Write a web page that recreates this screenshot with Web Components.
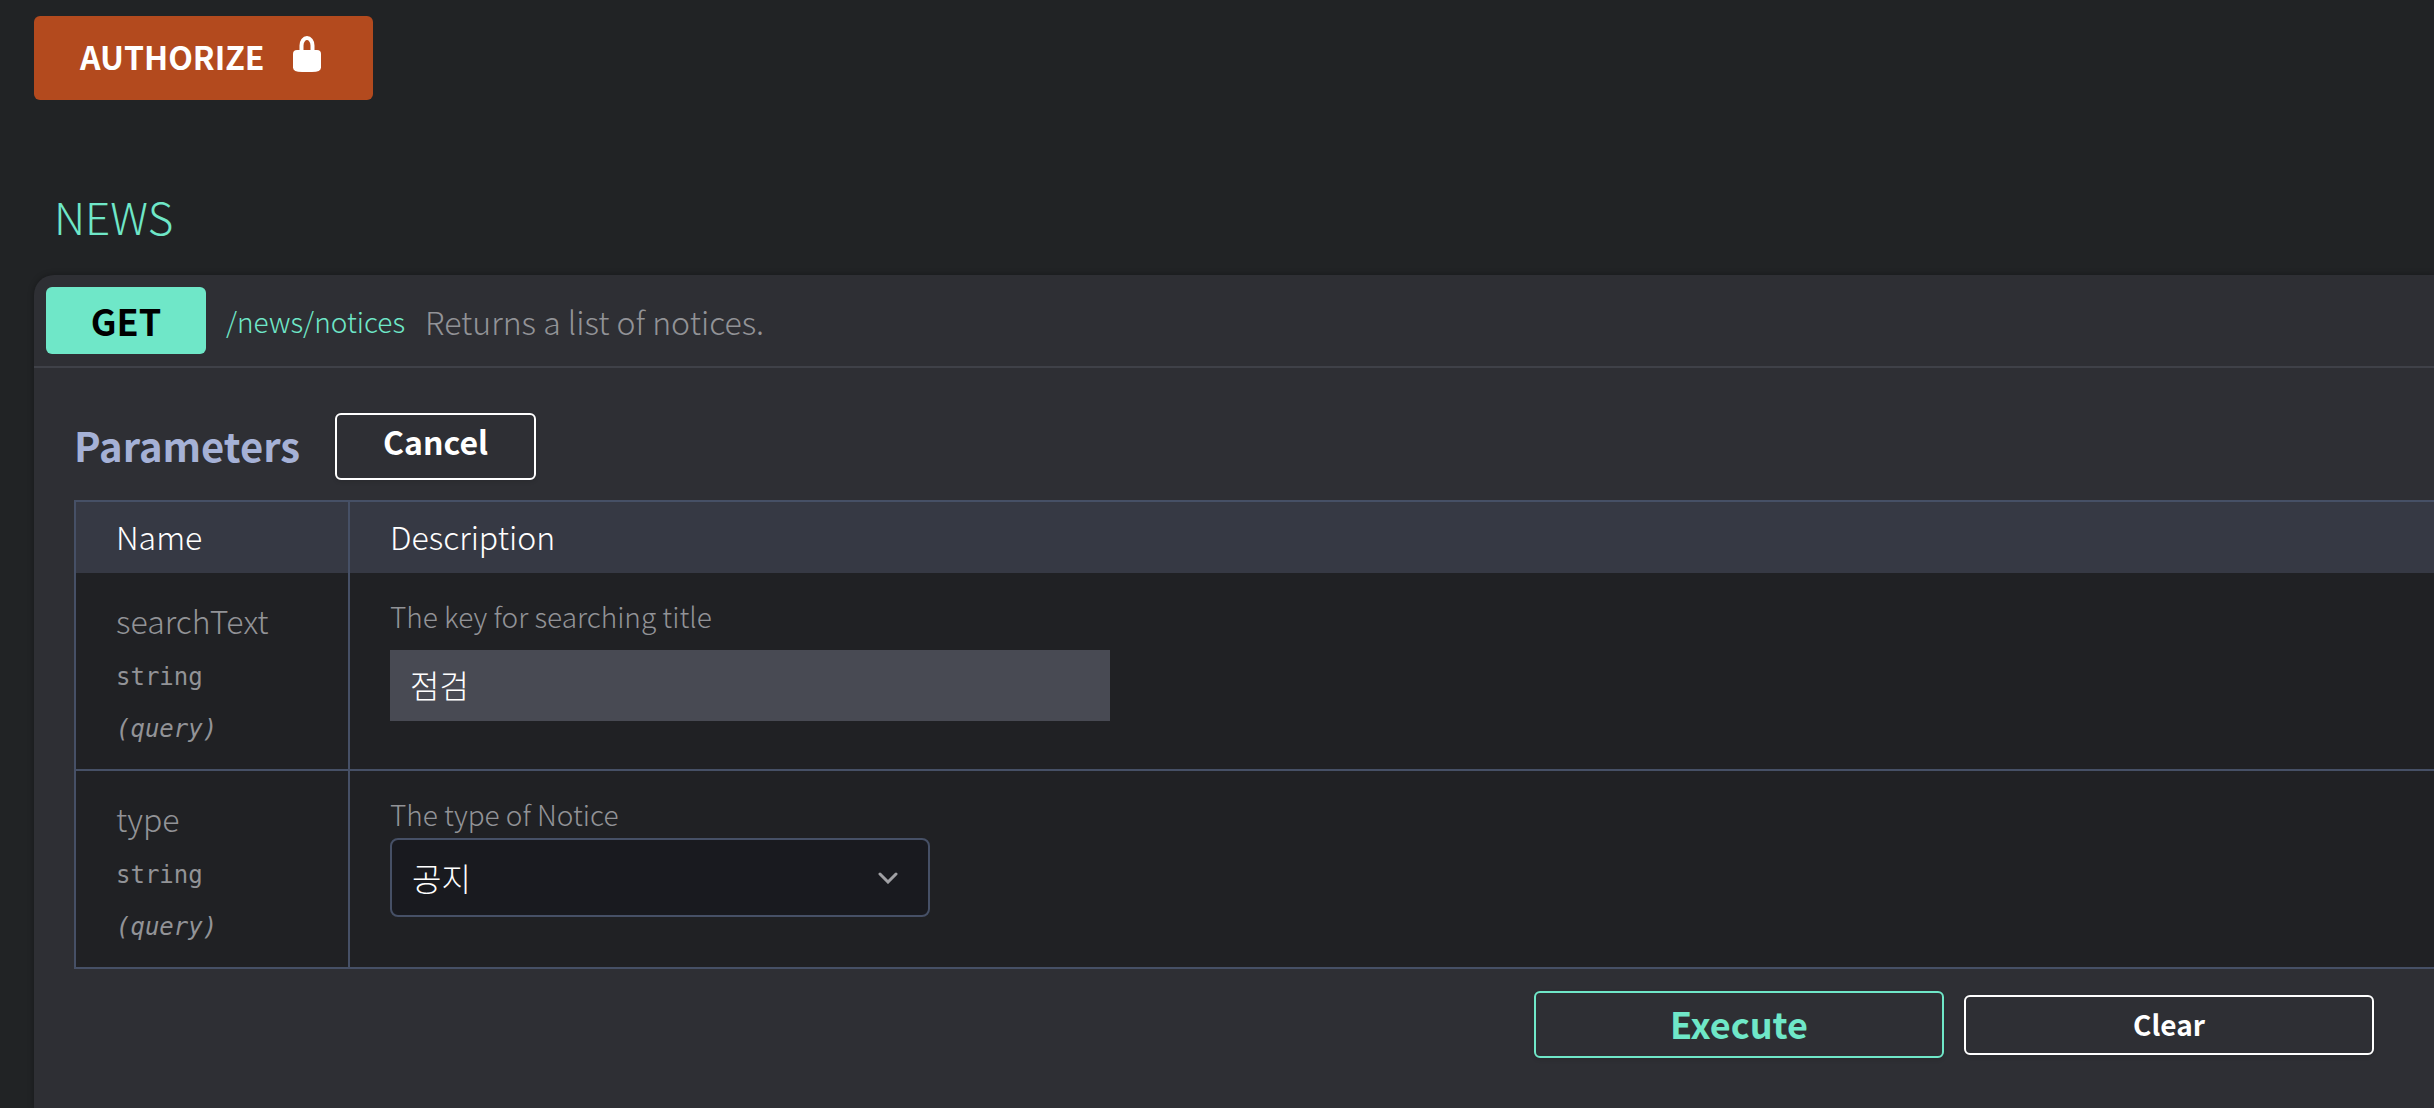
<!DOCTYPE html>
<html lang="en">
<head>
<meta charset="utf-8">
<title>API docs</title>
<style>
    :root {
        --page-bg: #212325;
        --cell-bg: #202124;
        --block-bg: #2e2f34;
        --head-bg: #363944;
        --border-color: #465066;
        --accent: #6fe7c8;
        --muted: #929397;
    }
    body {
        margin: 0;
        background: var(--page-bg);
        color: #fff;
        font-family: "Noto Sans CJK KR", "Noto Sans", sans-serif;
        font-weight: 300;
    }
</style>
</head>
<body>
<api-page>
    <auth-button slot="auth">AUTHORIZE</auth-button>
    <api-section name="NEWS">
        <api-operation method="GET" path="/news/notices" summary="Returns a list of notices.">
            <params-table></params-table>
        </api-operation>
    </api-section>
</api-page>

<script>
class BaseElement extends HTMLElement {
    constructor() {
        super();
        this.attachShadow({ mode: 'open' });
    }

    connectedCallback() {
        const template = document.createElement('template');
        template.innerHTML = this.render();
        this.shadowRoot.replaceChildren(template.content.cloneNode(true));
    }
}

class ApiPage extends BaseElement {
    render() {
        return `
            <style>
                :host {
                    display: flex;
                    flex-direction: column;
                    gap: 60px;
                    box-sizing: border-box;
                    min-height: 100vh;
                    padding: 16px 0 0 34px;
                    overflow: hidden;
                }
            </style>
            <slot name="auth"></slot>
            <slot></slot>
        `;
    }
}

class AuthButton extends BaseElement {
    render() {
        return `
            <style>
                :host {
                    display: block;
                }
                button {
                    display: flex;
                    align-items: center;
                    gap: 28px;
                    height: 84px;
                    padding: 0 52px 4px 46px;
                    border: 0;
                    border-radius: 6px;
                    background: #b34a1e;
                    color: #fff;
                    font: 700 32px/40px "Noto Sans CJK KR", sans-serif;
                    cursor: pointer;
                }
                svg {
                    width: 28px;
                    height: 36px;
                    padding-bottom: 4px;
                }
            </style>
            <button type="button">
                <slot></slot>
                <svg viewBox="0 0 28 36" aria-hidden="true">
                    <path d="M8.500 16V9.500a5.500 7.500 0 0 1 11 0V16" fill="none" stroke="#fff" stroke-width="4"/>
                    <path d="M4 14h20q4 0 4 4v13.500q0 4.500-9 4.500H9q-9 0-9-4.500V18q0-4 4-4z" fill="#fff"/>
                </svg>
            </button>
        `;
    }
}

class ApiSection extends BaseElement {
    render() {
        return `
            <style>
                :host {
                    display: flex;
                    flex-direction: column;
                    flex: 1;
                }
                h2 {
                    margin: 0;
                    padding: 26px 20px 29px;
                    color: var(--accent);
                    font-size: 44px;
                    font-weight: 300;
                    line-height: 60px;
                }
            </style>
            <h2>${this.getAttribute('name')}</h2>
            <slot></slot>
        `;
    }
}

class ApiOperation extends BaseElement {
    render() {
        return `
            <style>
                :host {
                    display: block;
                    flex: 1;
                    border-radius: 20px 0 0 0;
                    background: var(--block-bg);
                    box-shadow: 0 0 6px rgba(0, 0, 0, 0.3);
                }
                .summary {
                    display: flex;
                    align-items: center;
                    gap: 20px;
                    padding: 12px;
                    border-bottom: 2px solid #3f4148;
                }
                .method {
                    width: 160px;
                    border-radius: 6px;
                    background: var(--accent);
                    color: #000;
                    font-size: 36px;
                    font-weight: 700;
                    line-height: 67px;
                    text-align: center;
                }
                a {
                    color: var(--accent);
                    font-size: 28px;
                    text-decoration: none;
                }
                .text {
                    color: var(--muted);
                    font-size: 32px;
                    line-height: 40px;
                }
            </style>
            <div class="summary">
                <span class="method">${this.getAttribute('method')}</span>
                <a href="#notices">${this.getAttribute('path')}</a>
                <span class="text">${this.getAttribute('summary')}</span>
            </div>
            <slot></slot>
        `;
    }
}

class OutlineButton extends BaseElement {
    render() {
        return `
            <style>
                :host {
                    display: block;
                    --size: 32px;
                    --height: 67px;
                }
                :host([kind="execute"]) {
                    --size: 36px;
                    color: var(--accent);
                }
                :host([kind="clear"]) {
                    --size: 28px;
                    --height: 60px;
                }
                button {
                    box-sizing: border-box;
                    width: 100%;
                    height: var(--height);
                    padding: 0 46px 4px;
                    border: 2px solid currentColor;
                    border-radius: 6px;
                    background: transparent;
                    box-shadow: 0 2px 4px rgba(0, 0, 0, 0.1);
                    color: inherit;
                    font: 700 var(--size)/40px "Noto Sans CJK KR", sans-serif;
                    cursor: pointer;
                }
                :host([kind="cancel"]) button {
                    padding-bottom: 12px;
                }
                :host([kind="clear"]) button {
                    padding-bottom: 2px;
                }
            </style>
            <button type="button"><slot></slot></button>
        `;
    }
}

const params = [
    { name: 'searchText', text: 'The key for searching title', value: '점검' },
    { name: 'type', text: 'The type of Notice', options: ['공지'] }
];

class ParamsTable extends BaseElement {
    field(param) {
        if (!param.options) {
            return `<input id="${param.name}" type="text" value="${param.value}">`;
        }
        return `
            <div class="select">
                <select id="${param.name}">
                    ${param.options.map(option => `<option>${option}</option>`).join('')}
                </select>
                <svg viewBox="0 0 20 12" aria-hidden="true">
                    <path d="M2 2l8 8 8-8" fill="none" stroke="#a0a0a4" stroke-width="3" stroke-linecap="round"/>
                </svg>
            </div>
        `;
    }

    row(param) {
        return `
            <tr>
                <td class="name">
                    <div>${param.name}</div>
                    <div class="type">string</div>
                    <div class="type"><em>(query)</em></div>
                </td>
                <td class="desc">
                    <label for="${param.name}">${param.text}</label>
                    ${this.field(param)}
                </td>
            </tr>
        `;
    }

    render() {
        return `
            <style>
                :host {
                    display: block;
                    padding: 45px 0 0 40px;
                }
                header {
                    display: flex;
                    align-items: center;
                    gap: 35px;
                    margin-bottom: 20px;
                }
                h4 {
                    margin: 0;
                    padding-bottom: 4px;
                    color: #a5b1d6;
                    font-size: 40px;
                    font-weight: 700;
                    line-height: 60px;
                }
                table {
                    width: 100%;
                    border-spacing: 0;
                    border-top: 2px solid var(--border-color);
                    border-left: 2px solid var(--border-color);
                    font-size: 32px;
                }
                th {
                    height: 71px;
                    box-sizing: border-box;
                    padding: 0 40px 4px;
                    background: var(--head-bg);
                    font-weight: 300;
                    line-height: 40px;
                    text-align: left;
                }
                th:first-child,
                td:first-child {
                    box-sizing: border-box;
                    width: 274px;
                    border-right: 2px solid var(--border-color);
                }
                td {
                    border-bottom: 2px solid var(--border-color);
                    background: var(--cell-bg);
                    color: var(--muted);
                    vertical-align: top;
                }
                .name {
                    padding: 16px 40px 14px;
                    line-height: 62px;
                }
                .type {
                    font: 24px/52px "DejaVu Sans Mono", monospace;
                }
                .desc {
                    padding: 23px 40px 0;
                }
                label {
                    display: block;
                    font-size: 28px;
                    line-height: 40px;
                }
                input,
                select {
                    box-sizing: border-box;
                    margin: 0;
                    color: #fff;
                    font: 300 32px/40px "Noto Sans CJK KR", sans-serif;
                }
                input {
                    display: block;
                    width: 720px;
                    max-width: 100%;
                    height: 71px;
                    margin-top: 14px;
                    padding: 0 20px 4px;
                    border: 0;
                    background: #484a53;
                }
                .select {
                    display: grid;
                    align-items: center;
                    width: 540px;
                    max-width: 100%;
                    margin-top: 4px;
                }
                select {
                    grid-area: 1 / 1;
                    height: 79px;
                    padding: 0 20px 2px;
                    border: 2px solid var(--border-color);
                    border-radius: 8px;
                    appearance: none;
                    background: #191a1f;
                }
                svg {
                    grid-area: 1 / 1;
                    justify-self: end;
                    width: 20px;
                    height: 12px;
                    margin-right: 32px;
                    pointer-events: none;
                }
                footer {
                    display: flex;
                    align-items: center;
                    justify-content: flex-end;
                    gap: 20px;
                    padding: 22px 60px;
                }
                footer outline-button {
                    width: 410px;
                }
            </style>
            <header>
                <h4>Parameters</h4>
                <outline-button kind="cancel">Cancel</outline-button>
            </header>
            <table>
                <thead>
                    <tr><th>Name</th><th>Description</th></tr>
                </thead>
                <tbody>${params.map(param => this.row(param)).join('')}</tbody>
            </table>
            <footer>
                <outline-button kind="execute">Execute</outline-button>
                <outline-button kind="clear">Clear</outline-button>
            </footer>
        `;
    }
}

customElements.define('api-page', ApiPage);
customElements.define('auth-button', AuthButton);
customElements.define('api-section', ApiSection);
customElements.define('api-operation', ApiOperation);
customElements.define('outline-button', OutlineButton);
customElements.define('params-table', ParamsTable);
</script>
</body>
</html>
